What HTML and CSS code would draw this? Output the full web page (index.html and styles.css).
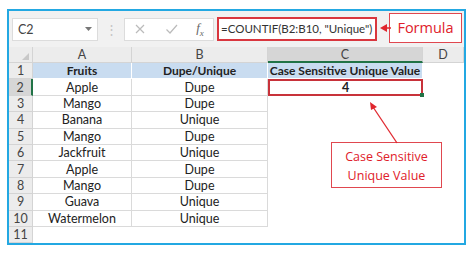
FILE: index.html
```html
<!DOCTYPE html>
<html lang="en">
<head>
    <meta charset="UTF-8">
    <title>COUNTIF Case Sensitive Unique Value</title>
    <link rel="stylesheet" href="styles.css">
</head>
<body>
    <div class="frame">
        <div class="toolbar">
            <div class="namebox">
                <span>C2</span>
                <svg class="caret" width="7" height="4" viewBox="0 0 7 4"><path d="M0 0h7L3.5 4z" fill="#777"/></svg>
            </div>
            <div class="grip">&#8942;</div>
            <div class="buttons">
                <svg width="12" height="12" viewBox="0 0 12 12"><path d="M2 2l8 8M10 2l-8 8" stroke="#bbb" stroke-width="1.2"/></svg>
                <svg width="13" height="12" viewBox="0 0 13 12"><path d="M1.5 6.5l3.5 3.5 7-8" stroke="#bbb" stroke-width="1.2" fill="none"/></svg>
                <span class="fx">f<sub>x</sub></span>
            </div>
            <div class="formula">=COUNTIF(B2:B10, "Unique")</div>
        </div>

        <div class="sheet">
            <div class="corner"><svg width="7" height="7" viewBox="0 0 7 7"><path d="M7 0v7H0z" fill="#c8c8c8"/></svg></div>
            <div class="colhead">A</div>
            <div class="colhead">B</div>
            <div class="colhead active">C</div>
            <div class="colhead">D</div>

            <div class="rowhead">1</div>
            <div class="cell title">Fruits</div>
            <div class="cell title">Dupe/Unique</div>
            <div class="cell title">Case Sensitive Unique Value</div>
            <div class="cell blank"></div>

            <div class="rowhead active">2</div>
            <div class="cell">Apple</div>
            <div class="cell">Dupe</div>
            <div class="cell result">4<i class="handle"></i></div>
            <div class="cell blank"></div>

            <div class="rowhead">3</div>
            <div class="cell">Mango</div>
            <div class="cell">Dupe</div>
            <div class="cell blank"></div>
            <div class="cell blank"></div>

            <div class="rowhead">4</div>
            <div class="cell">Banana</div>
            <div class="cell">Unique</div>
            <div class="cell blank"></div>
            <div class="cell blank"></div>

            <div class="rowhead">5</div>
            <div class="cell">Mango</div>
            <div class="cell">Dupe</div>
            <div class="cell blank"></div>
            <div class="cell blank"></div>

            <div class="rowhead">6</div>
            <div class="cell">Jackfruit</div>
            <div class="cell">Unique</div>
            <div class="cell blank"></div>
            <div class="cell blank"></div>

            <div class="rowhead">7</div>
            <div class="cell">Apple</div>
            <div class="cell">Dupe</div>
            <div class="cell blank"></div>
            <div class="cell blank"></div>

            <div class="rowhead">8</div>
            <div class="cell">Mango</div>
            <div class="cell">Dupe</div>
            <div class="cell blank"></div>
            <div class="cell blank"></div>

            <div class="rowhead">9</div>
            <div class="cell">Guava</div>
            <div class="cell">Unique</div>
            <div class="cell blank"></div>
            <div class="cell blank"></div>

            <div class="rowhead">10</div>
            <div class="cell">Watermelon</div>
            <div class="cell">Unique</div>
            <div class="cell blank"></div>
            <div class="cell blank"></div>

            <div class="rowhead">11</div>
            <div class="cell blank"></div>
            <div class="cell blank"></div>
            <div class="cell blank"></div>
            <div class="cell blank"></div>
        </div>

        <div class="callout formula-label">Formula</div>
        <div class="callout unique-label">Case Sensitive<br>Unique Value</div>
        <svg class="arrows" width="474" height="255" viewBox="0 0 474 255">
            <path d="M382 28H391" stroke="#e0262e" stroke-width="1.5"/>
            <path d="M380 28l7-4v8z" fill="#e0262e"/>
            <path d="M397 143L373 107" stroke="#e0262e" stroke-width="1.3"/>
            <path d="M370 102l7 5-6 3z" fill="#e0262e"/>
        </svg>
    </div>
</body>
</html>
```

FILE: styles.css
```css
body {
    margin: 0;
    font-family: Lato, 'Noto Sans', sans-serif;
    color: #222;
    background: #fff;
}
.frame {
    position: relative;
    margin: 9px 0 0 7px;
    width: 455px;
    height: 232px;
    border: 2px solid #23a8e2;
    background: #fff;
}
.toolbar {
    display: flex;
    align-items: center;
    height: 36px;
    padding: 0 3px;
    background: #f1f1f1;
}
.namebox {
    display: flex;
    align-items: center;
    justify-content: space-between;
    width: 74px;
    height: 21px;
    padding: 0 5px;
    background: #fff;
    border: 1px solid #dcdcdc;
    font-size: 12.5px;
    color: #444;
}
.grip {
    width: 26px;
    text-align: center;
    color: #c4c4c4;
    font-size: 13px;
}
.buttons {
    display: flex;
    align-items: center;
    justify-content: space-around;
    width: 88px;
    height: 21px;
    background: #fff;
    border: 1px solid #dcdcdc;
}
.fx {
    font-family: 'Liberation Serif', serif;
    font-style: italic;
    font-size: 13px;
    color: #666;
}
.fx sub {
    font-size: 9px;
}
.formula {
    margin-left: 3px;
    width: 154px;
    height: 20px;
    line-height: 20px;
    padding-left: 2px;
    background: #fff;
    border: 2px solid #d9363e;
    font-size: 11.5px;
    color: #333;
    white-space: nowrap;
    overflow: hidden;
}
.sheet {
    display: grid;
    grid-template-columns: 24px 99px 136px 155px 41px;
    grid-template-rows: 16px;
    grid-auto-rows: 16.4px;
    font-size: 12.5px;
}
.corner, .colhead, .rowhead {
    display: flex;
    align-items: center;
    justify-content: center;
    background: #ececec;
    border-right: 1px solid #d4d4d4;
    border-bottom: 1px solid #d4d4d4;
    color: #444;
    font-size: 12.5px;
    box-sizing: border-box;
}
.corner {
    justify-content: flex-end;
    align-items: flex-end;
    padding: 0 3px 2px 0;
}
.colhead.active {
    background: #d6d6d6;
    border-bottom: 2px solid #217346;
}
.rowhead.active {
    background: #d6d6d6;
    border-right: 2px solid #217346;
}
.cell {
    display: flex;
    align-items: center;
    justify-content: center;
    border-right: 1px solid #dadada;
    border-bottom: 1px solid #dadada;
    box-sizing: border-box;
    white-space: nowrap;
}
.cell.blank {
    border: none;
}
.cell.title {
    background: #c9dcf0;
    font-weight: bold;
    border-color: #fff;
    font-size: 12px;
}
.cell.result {
    position: relative;
    border: 2px solid #c8323a;
    font-weight: bold;
}
.handle {
    position: absolute;
    right: -3px;
    bottom: -3px;
    width: 4px;
    height: 4px;
    background: #217346;
}
.callout {
    position: absolute;
    background: #fff;
    border: 1.5px solid #e0474f;
    color: #e0202a;
    text-align: center;
    font-family: 'Open Sans', sans-serif;
}
.formula-label {
    left: 380px;
    top: 2px;
    width: 71px;
    height: 28px;
    line-height: 28px;
    font-size: 14.5px;
}
.unique-label {
    left: 322px;
    top: 131px;
    width: 111px;
    height: 46px;
    padding-top: 1px;
    line-height: 19px;
    font-size: 12.5px;
    box-sizing: border-box;
    display: flex;
    align-items: center;
    justify-content: center;
}
.arrows {
    position: absolute;
    left: -9px;
    top: -11px;
    pointer-events: none;
}
```
